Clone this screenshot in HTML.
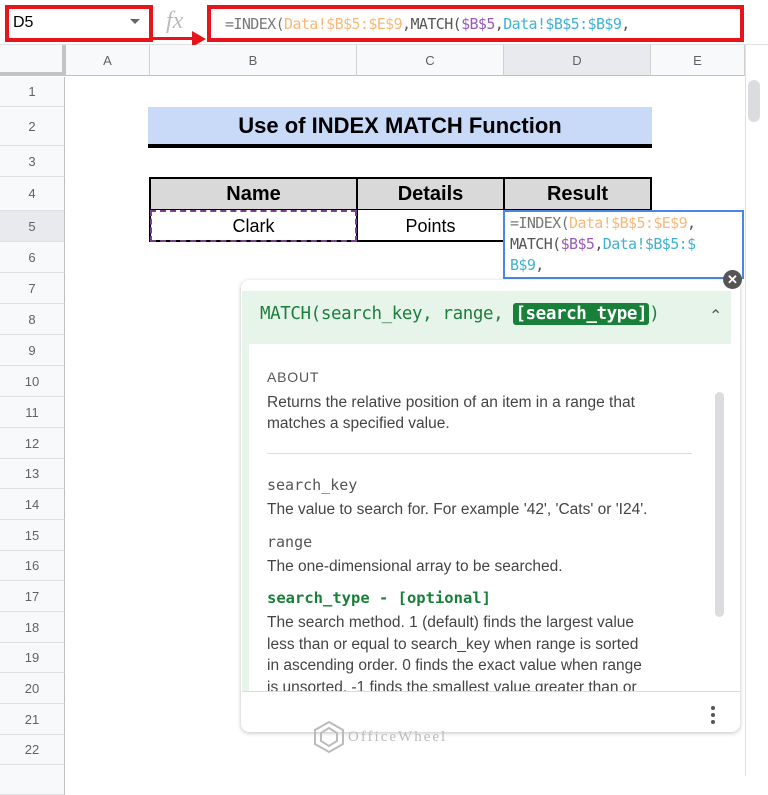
<!DOCTYPE html>
<html><head><meta charset="utf-8"><style>
*{box-sizing:border-box;margin:0;padding:0}
body{width:768px;height:776px;overflow:hidden;background:#fff;font-family:"Liberation Sans",sans-serif;position:relative}
.a{position:absolute}
.mono{font-family:"DejaVu Sans Mono","Liberation Mono",monospace}
.rh{position:absolute;left:0;width:65px;background:#f8f9fa;border-bottom:1px solid #e0e0e0;border-right:1px solid #c0c0c0;color:#5f6368;font-size:13px;display:flex;align-items:center;justify-content:center}
.ch{position:absolute;top:45px;height:31px;background:#f8f9fa;border-right:1px solid #d0d0d0;border-bottom:1px solid #c0c0c0;color:#5f6368;font-size:13px;display:flex;align-items:center;justify-content:center}
.or{color:#f7b87a}.pu{color:#9b59b6}.bl{color:#3fb1d3}.gr{color:#777}
</style></head><body>
<div class="a" style="left:0;top:0;width:768px;height:45px;background:#fff;border-bottom:1px solid #e0e0e0"></div>
<div class="a" style="left:5px;top:5px;width:148px;height:37px;border:4px solid #e8141c;font-size:16px;padding:5px 0 0 4px;color:#000">D5</div>
<div class="a" style="left:130px;top:19px;width:0;height:0;border-left:5px solid transparent;border-right:5px solid transparent;border-top:5px solid #666"></div>
<div class="a" style="left:166px;top:8px;font-family:'Liberation Serif',serif;font-style:italic;font-size:24px;color:#bbb">fx</div>
<div class="a" style="left:150px;top:37px;width:48px;height:3px;background:#e8141c"></div>
<div class="a" style="left:192px;top:31px;width:0;height:0;border-top:8px solid transparent;border-bottom:8px solid transparent;border-left:14px solid #e8141c"></div>
<div class="a mono" style="left:207px;top:5px;width:537px;height:37px;border:4px solid #e8141c;font-size:15px;padding:6px 0 0 14px;white-space:nowrap;color:#555;letter-spacing:-0.6px"><span class="gr">=INDEX(</span><span class="or">Data!$B$5:$E$9</span>,MATCH(<span class="pu">$B$5</span>,<span class="bl">Data!$B$5:$B$9</span>,</div>
<div class="a" style="left:0;top:45px;width:66px;height:31px;background:#f8f9fa;border-right:4px solid #c4c4c4;border-bottom:4px solid #c4c4c4"></div>
<div class="ch" style="left:66px;width:84px">A</div>
<div class="ch" style="left:150px;width:207px">B</div>
<div class="ch" style="left:357px;width:147px">C</div>
<div class="ch" style="left:504px;width:147px;background:#e8eaed">D</div>
<div class="ch" style="left:651px;width:94px">E</div>
<div class="a" style="left:745px;top:45px;width:23px;height:731px;background:#fff;border-left:1px solid #e0e0e0"></div>
<div class="a" style="left:748px;top:80px;width:12px;height:42px;background:#dadce0;border-radius:6px"></div>
<div class="rh" style="top:77px;height:30px">1</div>
<div class="rh" style="top:107px;height:39px">2</div>
<div class="rh" style="top:146px;height:31px">3</div>
<div class="rh" style="top:177px;height:34px">4</div>
<div class="rh" style="top:211px;height:31px;background:#e8eaed">5</div>
<div class="rh" style="top:242px;height:31px">6</div>
<div class="rh" style="top:273px;height:31px">7</div>
<div class="rh" style="top:304px;height:31px">8</div>
<div class="rh" style="top:335px;height:31px">9</div>
<div class="rh" style="top:366px;height:31px">10</div>
<div class="rh" style="top:397px;height:31px">11</div>
<div class="rh" style="top:428px;height:31px">12</div>
<div class="rh" style="top:459px;height:30px">13</div>
<div class="rh" style="top:489px;height:31px">14</div>
<div class="rh" style="top:520px;height:31px">15</div>
<div class="rh" style="top:551px;height:30px">16</div>
<div class="rh" style="top:581px;height:31px">17</div>
<div class="rh" style="top:612px;height:31px">18</div>
<div class="rh" style="top:643px;height:30px">19</div>
<div class="rh" style="top:673px;height:31px">20</div>
<div class="rh" style="top:704px;height:31px">21</div>
<div class="rh" style="top:735px;height:30px">22</div>
<div class="rh" style="top:765px;height:30px"></div>
<div class="a" style="left:148px;top:107px;width:504px;height:41px;background:#c9daf8;border-bottom:4px solid #000;font-weight:bold;font-size:22px;text-align:center;line-height:38px">Use of INDEX MATCH Function</div>
<div class="a" style="left:149px;top:177px;width:503px;height:65px;border:2px solid #000"></div>
<div class="a" style="left:151px;top:179px;width:499px;height:31px;background:#d9d9d9;border-bottom:1px solid #000"></div>
<div class="a" style="left:356px;top:177px;width:2px;height:65px;background:#000"></div>
<div class="a" style="left:503px;top:177px;width:2px;height:34px;background:#000"></div>
<div class="a" style="left:151px;top:178px;width:205px;height:32px;font-weight:bold;font-size:20px;text-align:center;line-height:32px">Name</div>
<div class="a" style="left:358px;top:178px;width:145px;height:32px;font-weight:bold;font-size:20px;text-align:center;line-height:32px">Details</div>
<div class="a" style="left:505px;top:178px;width:145px;height:32px;font-weight:bold;font-size:20px;text-align:center;line-height:32px">Result</div>
<div class="a" style="left:150px;top:210px;width:207px;height:32px;border:2px dashed #7b3f8f;font-size:18px;text-align:center;line-height:28px">Clark</div>
<div class="a" style="left:358px;top:211px;width:145px;height:30px;font-size:18px;text-align:center;line-height:30px">Points</div>
<div class="a mono" style="left:503px;top:210px;width:241px;height:69px;background:#fff;border:2px solid #4a86e8;font-size:15px;line-height:21px;padding:1px 0 0 5px;color:#555;letter-spacing:-0.6px;white-space:nowrap"><span class="gr">=INDEX(</span><span class="or">Data!$B$5:$E$9</span>,<br>MATCH(<span class="pu">$B$5</span>,<span class="bl">Data!$B$5:$</span><br><span class="bl">B$9</span>,</div>
<div class="a" style="left:241px;top:280px;width:499px;height:452px;background:#fff;border-radius:8px;box-shadow:0 1px 4px rgba(0,0,0,.25)"></div>
<div class="a" style="left:242px;top:291px;width:489px;height:400px;background:#e6f4ea"></div>
<div class="a mono" style="left:260px;top:304px;font-size:17.5px;color:#1e7e3e;letter-spacing:-0.4px;white-space:nowrap">MATCH(search_key, range, <span style="background:#188038;color:#fff;border-radius:3px;padding:1px 2px;font-weight:bold">[search_type]</span>)</div>
<div class="a" style="left:709px;top:306px;font-size:16px;color:#555">&#8963;</div>
<div class="a" style="left:249px;top:344px;width:482px;height:347px;background:#fff;overflow:hidden">
 <div class="a" style="left:18px;top:25px;font-size:14px;color:#555;letter-spacing:.8px">ABOUT</div>
 <div class="a" style="left:18px;top:48px;font-size:15.5px;line-height:21px;color:#444;white-space:nowrap">Returns the relative position of an item in a range that<br>matches a specified value.</div>
 <div class="a" style="left:18px;top:109px;width:425px;height:1px;background:#dadce0"></div>
 <div class="a mono" style="left:18px;top:132px;font-size:15px;color:#555">search_key</div>
 <div class="a" style="left:18px;top:157px;font-size:15.5px;color:#444;white-space:nowrap">The value to search for. For example '42', 'Cats' or 'I24'.</div>
 <div class="a mono" style="left:18px;top:189px;font-size:15px;color:#555">range</div>
 <div class="a" style="left:18px;top:214px;font-size:15.5px;color:#444">The one-dimensional array to be searched.</div>
 <div class="a mono" style="left:18px;top:245px;font-size:15.5px;color:#188038;font-weight:bold">search_type - [optional]</div>
 <div class="a" style="left:18px;top:268px;font-size:15.5px;line-height:21.5px;color:#444;white-space:nowrap">The search method. 1 (default) finds the largest value<br>less than or equal to search_key when range is sorted<br>in ascending order. 0 finds the exact value when range<br>is unsorted. -1 finds the smallest value greater than or</div>
 <div class="a" style="left:466px;top:48px;width:9px;height:225px;background:#dadce0;border-radius:5px"></div>
</div>
<div class="a" style="left:242px;top:691px;width:498px;height:1px;background:#dadce0"></div>
<div class="a" style="left:711px;top:706px;width:4px;height:4px;background:#555;border-radius:2px;box-shadow:0 7px 0 #555,0 14px 0 #555"></div>
<div class="a" style="left:723px;top:270px;width:19px;height:19px;border-radius:50%;background:#555;color:#fff;font-size:13px;line-height:19px;text-align:center;font-weight:bold">✕</div>
<svg class="a" style="left:312px;top:720px" width="34" height="34" viewBox="0 0 34 34"><path d="M17 2 L31 10 L31 24 L17 32 L3 24 L3 10 Z M17 8 L25 13 L25 21 L17 26 L9 21 L9 13 Z" fill="none" stroke="#bbb" stroke-width="2"/></svg>
<div class="a" style="left:348px;top:729px;font-family:'Liberation Serif',serif;font-size:15px;color:#bbb;letter-spacing:2px">OfficeWheel</div>
</body></html>
